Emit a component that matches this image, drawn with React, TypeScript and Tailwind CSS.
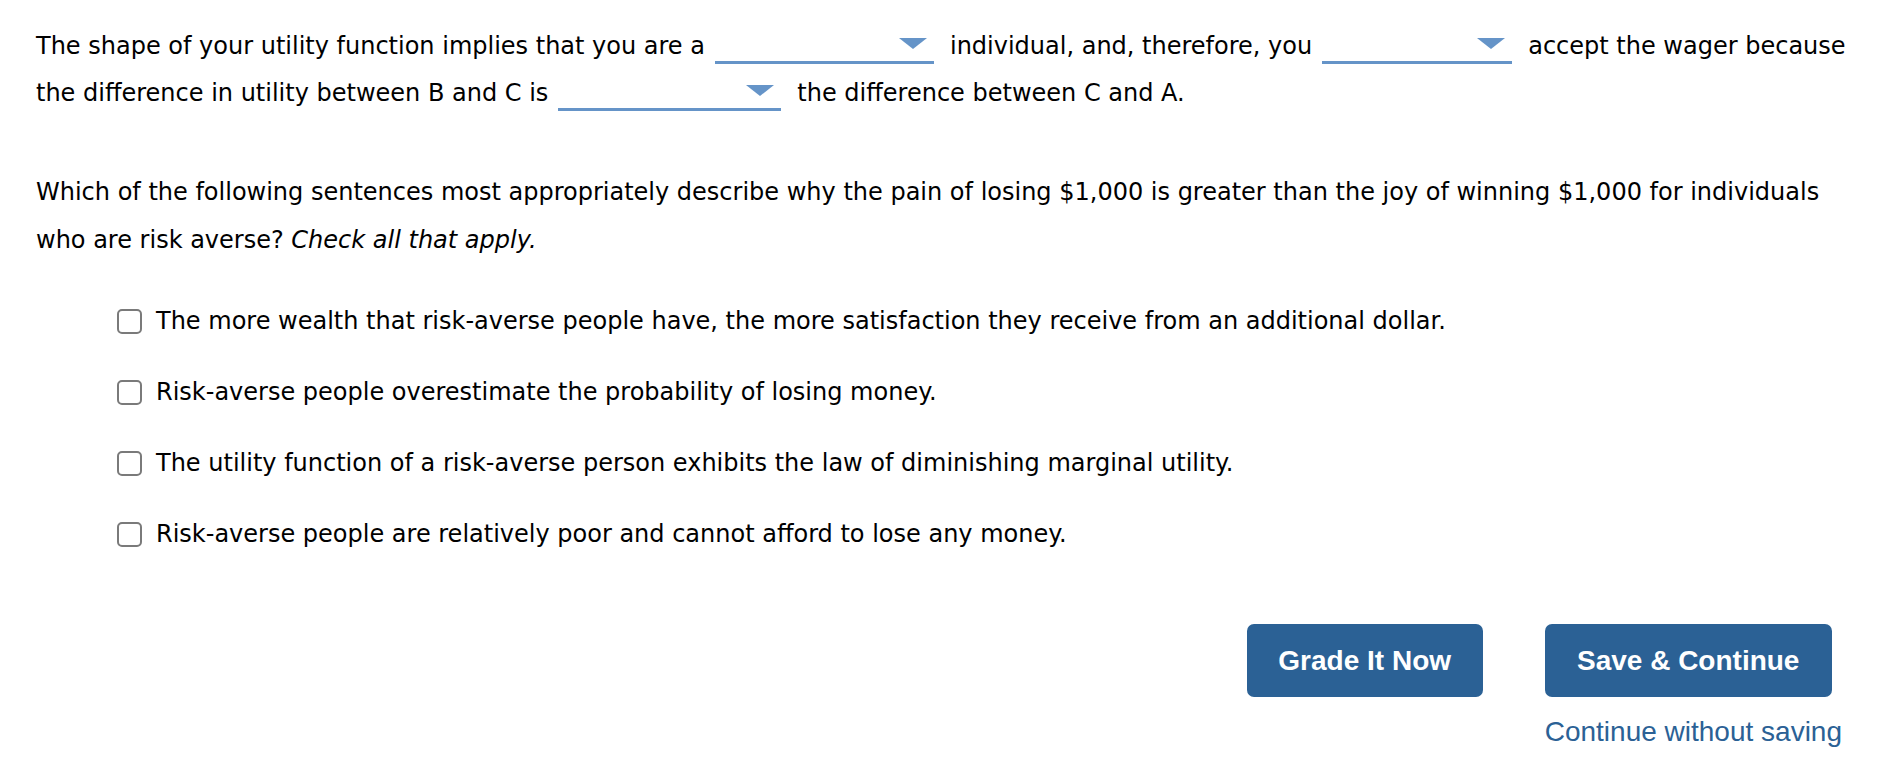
import React from "react";

const Dropdown = ({ width }: { width: string }) => (
  <span
    className={`relative inline-block align-middle h-[34px] border-b-[3px] border-[#6594c8] ml-[10px] mr-[16px] ${width}`}
  >
    <svg
      className="absolute right-[7px] top-[8px]"
      width="28"
      height="11"
      viewBox="0 0 28 11"
    >
      <polygon points="0,0 28,0 14,11" fill="#6594c8" />
    </svg>
  </span>
);

const options = [
  "The more wealth that risk-averse people have, the more satisfaction they receive from an additional dollar.",
  "Risk-averse people overestimate the probability of losing money.",
  "The utility function of a risk-averse person exhibits the law of diminishing marginal utility.",
  "Risk-averse people are relatively poor and cannot afford to lose any money.",
];

export default function App() {
  return (
    <div className="w-[1900px] h-[758px] bg-white text-[#000] pt-[23px] font-['DejaVu_Sans',Verdana,sans-serif] text-[24px]">
      <div className="pl-[36px] pr-[40px]">
        <p className="leading-[47px]">
          The shape of your utility function implies that you are a
          <Dropdown width="w-[219px]" />
          individual, and, therefore, you
          <Dropdown width="w-[190px]" />
          accept the wager because the difference in utility between B and C is
          <Dropdown width="w-[223px]" />
          the difference between C and A.
        </p>

        <p className="leading-[48px] mt-[51px]">
          Which of the following sentences most appropriately describe why the pain of losing $1,000 is greater than the joy of winning $1,000 for individuals who are risk averse? <i>Check all that apply.</i>
        </p>

        <div className="mt-[41px] ml-[81px] flex flex-col gap-[38px]">
          {options.map((o) => (
            <label key={o} className="flex items-center gap-[14px] leading-[33px]">
              <span className="w-[25px] h-[25px] rounded-[5px] border-2 border-[#7a7a7a] bg-white shrink-0" />
              <span>{o}</span>
            </label>
          ))}
        </div>
      </div>

      <div className="mt-[73px] pr-[58px] flex justify-end gap-[62px] font-['Liberation_Sans',Arial,sans-serif]">
        <button className="w-[236px] h-[73px] rounded-[7px] bg-[#2b6195] text-white font-bold text-[28px]">
          Grade It Now
        </button>
        <div className="flex flex-col items-start">
          <button className="w-[287px] h-[73px] rounded-[7px] bg-[#2b6195] text-white font-bold text-[28px]">
            Save &amp; Continue
          </button>
          <a className="mt-[19px] text-[#2b6195] text-[28px] leading-[32px] whitespace-nowrap">
            Continue without saving
          </a>
        </div>
      </div>
    </div>
  );
}
